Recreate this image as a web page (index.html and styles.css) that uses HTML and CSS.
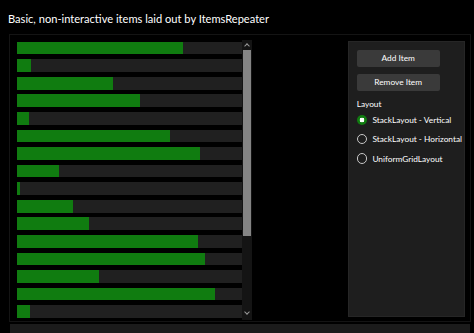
FILE: index.html
```html
<!DOCTYPE html>
<html>
	<head>
		<meta charset="utf-8" />
		<title>ItemsRepeater</title>
		<link rel="stylesheet" href="styles.css">
	</head>
	<body>
		<div class="title">Basic, non-interactive items laid out by ItemsRepeater</div>
		<div class="mainbox">
			<div class="viewer">
				<div class="items">
					<div class="bar"><div class="fill" style="width: 166px"></div></div>
					<div class="bar"><div class="fill" style="width: 14px"></div></div>
					<div class="bar"><div class="fill" style="width: 96.6px"></div></div>
					<div class="bar"><div class="fill" style="width: 123.3px"></div></div>
					<div class="bar"><div class="fill" style="width: 12.6px"></div></div>
					<div class="bar"><div class="fill" style="width: 153.3px"></div></div>
					<div class="bar"><div class="fill" style="width: 183.3px"></div></div>
					<div class="bar"><div class="fill" style="width: 42.6px"></div></div>
					<div class="bar"><div class="fill" style="width: 3.3px"></div></div>
					<div class="bar"><div class="fill" style="width: 56.6px"></div></div>
					<div class="bar"><div class="fill" style="width: 72.6px"></div></div>
					<div class="bar"><div class="fill" style="width: 181px"></div></div>
					<div class="bar"><div class="fill" style="width: 188.3px"></div></div>
					<div class="bar"><div class="fill" style="width: 82.6px"></div></div>
					<div class="bar"><div class="fill" style="width: 198.3px"></div></div>
					<div class="bar"><div class="fill" style="width: 13.3px"></div></div>
					<div class="bar"><div class="fill" style="width: 120px"></div></div>
				</div>
				<div class="scrollbar">
					<div class="arrow up"></div>
					<div class="thumb"></div>
					<div class="arrow down"></div>
				</div>
			</div>
			<div class="panel">
				<div class="btn">Add Item</div>
				<div class="btn">Remove Item</div>
				<div class="label">Layout</div>
				<div class="radio checked"><span class="dot"></span>StackLayout - Vertical</div>
				<div class="radio"><span class="dot"></span>StackLayout - Horizontal</div>
				<div class="radio"><span class="dot"></span>UniformGridLayout</div>
			</div>
		</div>
		<div class="bottombar"></div>
	</body>
</html>
```

FILE: styles.css
```css
*{
	margin: 0;
	padding: 0;
	box-sizing: border-box;
}
body{
	background: #000;
	color: #fff;
	font-family: Lato, "Noto Sans", sans-serif;
	width: 474px;
	height: 333px;
	overflow: hidden;
}
.title{
	font-size: 11.1px;
	line-height: 20px;
	padding: 9px 0 0 8px;
	height: 34px;
	white-space: nowrap;
}
.mainbox{
	display: flex;
	margin: 0 3px 0 9px;
	height: 288px;
	border: 1px solid #141414;
	padding: 5px 5px 0 6.7px;
}
.viewer{
	display: flex;
	width: 235.3px;
	height: 280px;
	overflow: hidden;
}
.items{
	width: 225.6px;
	padding-top: 1.7px;
	display: flex;
	flex-direction: column;
	gap: 4.9px;
}
.bar{
	flex: none;
	height: 12.7px;
	background: #202020;
}
.fill{
	height: 100%;
	background: #107c10;
}
.scrollbar{
	width: 9.7px;
	background: #141414;
	display: flex;
	flex-direction: column;
	align-items: center;
}
.thumb{
	width: 8.4px;
	height: 186px;
	background: #848484;
}
.arrow{
	width: 4px;
	height: 4px;
	border-left: 1px solid #9a9a9a;
	border-top: 1px solid #9a9a9a;
}
.up{
	transform: rotate(45deg);
	margin: 4px 0 2px;
}
.down{
	transform: rotate(225deg);
	margin: auto 0 6px;
}
.panel{
	flex: none;
	margin-left: auto;
	margin-top: 0.7px;
	width: 117.3px;
	height: 276.3px;
	background: #1e1e1e;
	border: 1px solid #262626;
	padding: 8px 0 0 8px;
	font-size: 8.3px;
	white-space: nowrap;
}
.btn{
	width: 83px;
	height: 17px;
	line-height: 17px;
	text-align: center;
	background: #3a3a3a;
	border-radius: 2px;
	margin-bottom: 7.3px;
}
.label{
	margin-top: 3px;
	line-height: 12px;
	height: 12px;
}
.radio{
	display: flex;
	align-items: center;
	height: 19.3px;
}
.dot{
	flex: none;
	width: 10.4px;
	height: 10.4px;
	border: 1px solid #c8c8c8;
	border-radius: 50%;
	margin-right: 5.3px;
}
.checked .dot{
	border: none;
	background: radial-gradient(circle, #fff 0 2.2px, #107c10 2.6px);
}
.bottombar{
	margin: 2px 4px 0 10px;
	height: 9px;
	background: #1b1b1b;
}
```
